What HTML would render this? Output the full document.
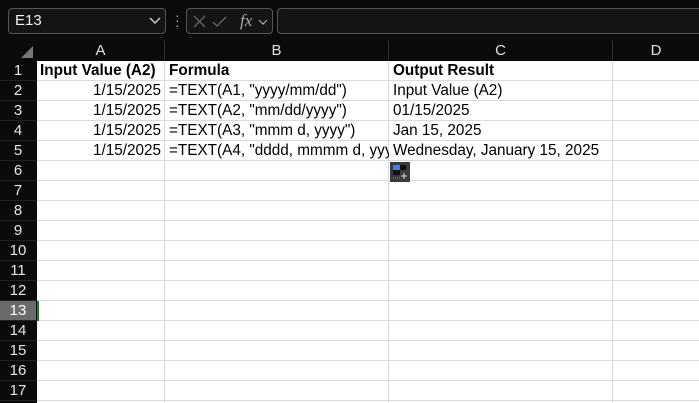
<!DOCTYPE html>
<html><head><style>
body{margin:0;width:699px;height:403px;background:#0a0a0a;overflow:hidden;font-family:"Liberation Sans",Arial,sans-serif;position:relative}
.abs{position:absolute}
.box{border:1px solid #555;border-radius:4px;background:#141414}
.ch{position:absolute;top:41px;height:20px;color:#e0e0e0;font-size:15px;text-align:center;line-height:20px;border-right:1px solid #333}
.rh{position:absolute;left:0;width:36px;height:20px;color:#e6e6e6;font-size:15px;text-align:center;line-height:20px;border-bottom:1px solid #222;box-sizing:border-box}
.grid{position:absolute;left:37px;top:61px;width:662px;height:342px;background:#fff}
.c{position:absolute;height:20px;line-height:20px;font-size:15.3px;color:#000;white-space:nowrap;overflow:hidden;padding:0 4px;box-sizing:border-box}
</style></head><body>
<div class="abs box" style="left:8px;top:8px;width:156px;height:24px"><span class="abs" style="left:6px;top:3px;color:#eee;font-size:15px">E13</span>
<svg class="abs" style="left:140px;top:8px" width="12" height="8"><path d="M1 1L6 6L11 1" stroke="#ccc" fill="none" stroke-width="1.5"/></svg></div>
<div class="abs" style="left:175px;top:13px;color:#aaa;font-size:14px;line-height:5px">·<br>·<br>·</div>
<div class="abs box" style="left:186px;top:8px;width:85px;height:24px">
<svg class="abs" style="left:6px;top:6px" width="78" height="14"><path d="M1 1L12 12M12 1L1 12" stroke="#666" stroke-width="1.3"/><path d="M20 7L24 11L33 2" stroke="#666" fill="none" stroke-width="1.3"/><path d="M66 5L70 9L74 5" stroke="#aaa" fill="none" stroke-width="1.2"/></svg>
<span class="abs" style="left:53px;top:2px;color:#aaa;font-style:italic;font-family:'Liberation Serif',serif;font-size:17px">fx</span></div>
<div class="abs box" style="left:277px;top:8px;width:430px;height:24px"></div>
<svg class="abs" style="left:20px;top:45px" width="14" height="14"><path d="M13 1L13 13L1 13Z" fill="#777"/></svg>
<div class="ch" style="left:37px;width:127px">A</div>
<div class="ch" style="left:165px;width:223px">B</div>
<div class="ch" style="left:389px;width:223px">C</div>
<div class="ch" style="left:613px;width:86px;border:none">D</div>
<div class="grid">
<svg class="abs" style="left:0;top:0" width="662" height="342">
<g stroke="#dadada" stroke-width="1">
<path d="M127.5 0V342M351.5 0V342M575.5 0V342"/>
<path d="M0 19.5H662M0 39.5H662M0 59.5H662M0 79.5H662M0 99.5H662M0 119.5H662M0 139.5H662M0 159.5H662M0 179.5H662M0 199.5H662M0 219.5H662M0 239.5H662M0 259.5H662M0 279.5H662M0 299.5H662M0 319.5H662M0 339.5H662"/>
</g>
<rect x="0" y="240" width="2" height="20" fill="#107c41"/>
</svg>
<div class="c" style="left:0;top:0;width:128px;font-weight:bold;padding-left:3px">Input Value (A2)</div>
<div class="c" style="left:128px;top:0;width:224px;font-weight:bold">Formula</div>
<div class="c" style="left:352px;top:0;width:224px;font-weight:bold">Output Result</div>
<div class="c" style="left:0;top:20px;width:128px;text-align:right">1/15/2025</div>
<div class="c" style="left:0;top:40px;width:128px;text-align:right">1/15/2025</div>
<div class="c" style="left:0;top:60px;width:128px;text-align:right">1/15/2025</div>
<div class="c" style="left:0;top:80px;width:128px;text-align:right">1/15/2025</div>
<div class="c" style="left:128px;top:20px;width:224px">=TEXT(A1, "yyyy/mm/dd")</div>
<div class="c" style="left:128px;top:40px;width:224px">=TEXT(A2, "mm/dd/yyyy")</div>
<div class="c" style="left:128px;top:60px;width:224px">=TEXT(A3, "mmm d, yyyy")</div>
<div class="c" style="left:128px;top:80px;width:224px">=TEXT(A4, "dddd, mmmm d, yyyy")</div>
<div class="c" style="left:352px;top:20px;width:260px">Input Value (A2)</div>
<div class="c" style="left:352px;top:40px;width:260px">01/15/2025</div>
<div class="c" style="left:352px;top:60px;width:260px">Jan 15, 2025</div>
<div class="c" style="left:352px;top:80px;width:300px">Wednesday, January 15, 2025</div>
<svg class="abs" style="left:353px;top:101px" width="20" height="20"><rect width="20" height="20" fill="#3a3a3a"/><rect x="3" y="3" width="7" height="5" fill="#4a7de0"/><rect x="10" y="3" width="6" height="5" fill="#111"/><rect x="3" y="8" width="7" height="5" fill="#111"/><path d="M14 11V17M11 14H17" stroke="#ddd"/><path d="M3 16H10" stroke="#999" stroke-dasharray="1 1"/></svg>
</div>
<div class="rh" style="top:61px">1</div><div class="rh" style="top:81px">2</div><div class="rh" style="top:101px">3</div><div class="rh" style="top:121px">4</div><div class="rh" style="top:141px">5</div><div class="rh" style="top:161px">6</div><div class="rh" style="top:181px">7</div><div class="rh" style="top:201px">8</div><div class="rh" style="top:221px">9</div><div class="rh" style="top:241px">10</div><div class="rh" style="top:261px">11</div><div class="rh" style="top:281px">12</div><div class="rh" style="top:301px;background:#6b6b6b;color:#fff">13</div><div class="rh" style="top:321px">14</div><div class="rh" style="top:341px">15</div><div class="rh" style="top:361px">16</div><div class="rh" style="top:381px">17</div>
</body></html>
